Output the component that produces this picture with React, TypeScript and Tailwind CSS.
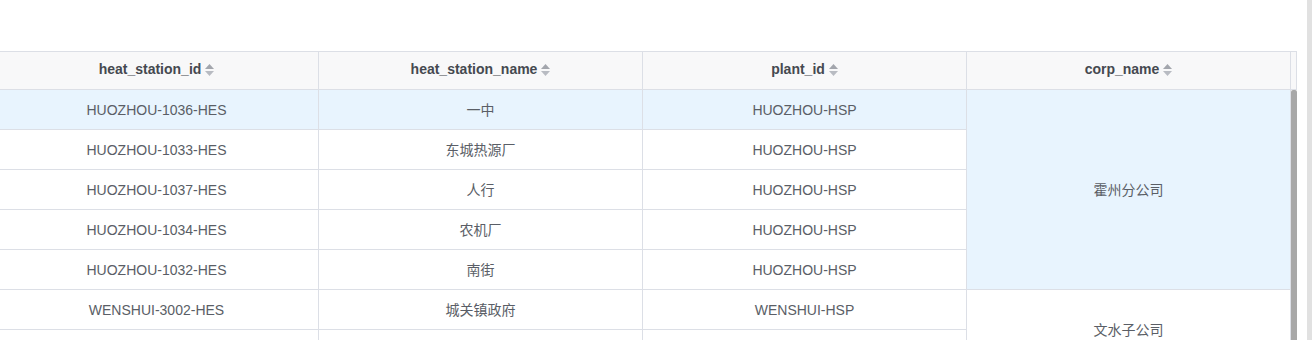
import { Fragment } from "react"

type Row = {
  id: string,
  name: string,
  plant: string,
}

const columns = ['heat_station_id', 'heat_station_name', 'plant_id', 'corp_name']

// last row sits below the fold, only its top edge shows
const groups: { corp: string, rows: Row[] }[] = [
  {
    corp: '霍州分公司',
    rows: [
      { id: 'HUOZHOU-1036-HES', name: '一中', plant: 'HUOZHOU-HSP' },
      { id: 'HUOZHOU-1033-HES', name: '东城热源厂', plant: 'HUOZHOU-HSP' },
      { id: 'HUOZHOU-1037-HES', name: '人行', plant: 'HUOZHOU-HSP' },
      { id: 'HUOZHOU-1034-HES', name: '农机厂', plant: 'HUOZHOU-HSP' },
      { id: 'HUOZHOU-1032-HES', name: '南街', plant: 'HUOZHOU-HSP' },
    ],
  },
  {
    corp: '文水子公司',
    rows: [
      { id: 'WENSHUI-3002-HES', name: '城关镇政府', plant: 'WENSHUI-HSP' },
      { id: '', name: '', plant: '' },
    ],
  },
]

function SortIcon() {
  return (
    <svg width="9" height="14" viewBox="0 0 9 14" className="ml-[4px] shrink-0">
      <polygon points="0,6 4.5,1 9,6" fill="#a3a6ad" />
      <polygon points="0,8 4.5,13 9,8" fill="#b8bbc2" />
    </svg>
  )
}

export default function App() {
  const hovered = 0

  return (
    <div className="flex h-[340px] w-[1312px] overflow-hidden bg-white text-[14px] text-[#5a5e66]" style={{ fontFamily: '"Liberation Sans", "Noto Sans CJK SC", Arial, sans-serif' }}>
      <div className="flex-1 overflow-hidden pt-[51px] pr-[10px]">
        <div className="ml-[-6px] w-[1303px]">

          {/* header */}
          <div className="flex border-t border-l border-[#dcdfe6] bg-[#f8f8f9]">
            {columns.map((c) => (
              <div key={c} className="flex h-[38px] w-[324px] shrink-0 items-center justify-center border-r border-b border-[#dcdfe6] pb-[2px] font-bold text-[#454950]">
                <span>{c}</span>
                <SortIcon />
              </div>
            ))}
            <div className="h-[38px] w-[6px] shrink-0 border-r border-b border-[#dcdfe6]" />
          </div>

          {/* body */}
          <div className="flex">
            <div className="grid grid-cols-[324px_324px_324px_324px] auto-rows-[40px] border-l border-[#dcdfe6]">
              {groups.map((g, gi) => {
                const start = groups.slice(0, gi).reduce((n, x) => n + x.rows.length, 0)
                const groupHover = hovered >= start && hovered < start + g.rows.length
                return (
                  <Fragment key={g.corp}>
                    {g.rows.map((r, ri) => {
                      const bg = start + ri === hovered ? 'bg-[#e8f4fe]' : 'bg-white'
                      return (
                        <Fragment key={ri}>
                          <div className={`flex items-center justify-center border-r border-b border-[#dcdfe6] pt-[2px] ${bg}`} style={{ gridRow: start + ri + 1, gridColumn: 1 }}>{r.id}</div>
                          <div className={`flex items-center justify-center border-r border-b border-[#dcdfe6] pt-[2px] ${bg}`} style={{ gridRow: start + ri + 1, gridColumn: 2 }}>{r.name}</div>
                          <div className={`flex items-center justify-center border-r border-b border-[#dcdfe6] pt-[2px] ${bg}`} style={{ gridRow: start + ri + 1, gridColumn: 3 }}>{r.plant}</div>
                        </Fragment>
                      )
                    })}
                    <div
                      className={`flex items-center justify-center border-r border-b border-[#dcdfe6] pt-[2px] ${groupHover ? 'bg-[#e8f4fe]' : 'bg-white'}`}
                      style={{ gridRow: `${start + 1} / span ${g.rows.length}`, gridColumn: 4 }}
                    >
                      {g.corp}
                    </div>
                  </Fragment>
                )
              })}
            </div>
            <div className="w-[6px] shrink-0 bg-white">
              <div className="h-[400px] rounded-t-[2px] bg-[#a8a8a8]" />
            </div>
          </div>

        </div>
      </div>
      <div className="w-[5px] shrink-0 bg-[#e1e1e1]" />
    </div>
  )
}
